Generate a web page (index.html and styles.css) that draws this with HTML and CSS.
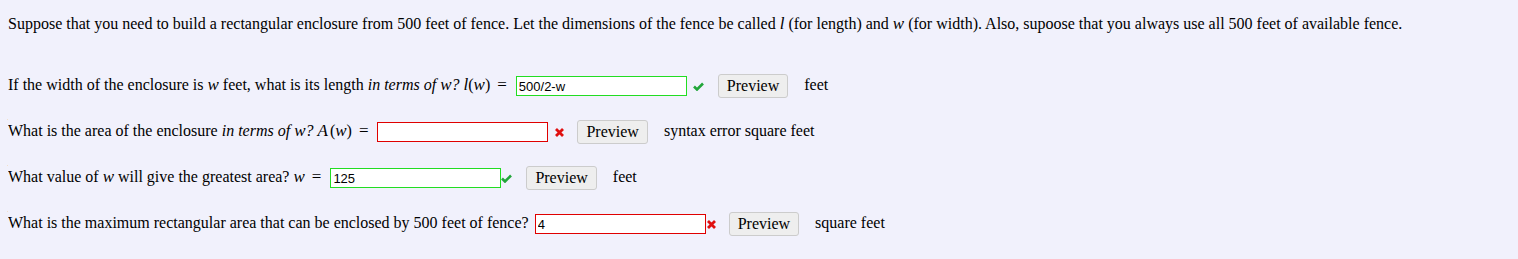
FILE: index.html
```html
<!DOCTYPE html>
<html lang="en">
<head>
    <meta charset="UTF-8">
    <title>Fence enclosure problem</title>
    <link rel="stylesheet" href="styles.css">
</head>
<body>
    <div class="problem">
        <p class="intro">Suppose that you need to build a rectangular enclosure from 500 feet of fence. Let the dimensions of the fence be called <span class="m">l</span> (for length) and <span class="m">w</span> (for width). Also, supoose that you always use all 500 feet of available fence.</p>

        <div class="row">
            If the width of the enclosure is <span class="m">w</span> feet, what is its length <em>in terms of <span class="m">w</span>?</em> <span class="m">l</span>(<span class="m">w</span>) <span class="eq">=</span>
            <input class="answer ok" type="text" value="500/2-w">
            <svg class="mark" width="11" height="9" viewBox="0 0 11 9"><path d="M1 4.5 L4 7.5 L10 1.5" fill="none" stroke="#22a63a" stroke-width="2.6"/></svg>
            <button class="preview">Preview</button>
            <span class="unit">feet</span>
        </div>

        <div class="row">
            What is the area of the enclosure <em>in terms of <span class="m">w</span>?</em> <span class="m cap">A</span>(<span class="m">w</span>) <span class="eq">=</span>
            <input class="answer bad" type="text" value="">
            <svg class="mark near" width="11" height="9" viewBox="0 0 11 9"><path d="M2 1 L9 8 M9 1 L2 8" fill="none" stroke="#e01010" stroke-width="2.8"/></svg>
            <button class="preview">Preview</button>
            <span class="unit">syntax error square feet</span>
        </div>

        <div class="row">
            What value of <span class="m">w</span> will give the greatest area? <span class="m">w</span> <span class="eq">=</span>
            <input class="answer ok" type="text" value="125"><svg class="mark tight" width="11" height="9" viewBox="0 0 11 9"><path d="M1 4.5 L4 7.5 L10 1.5" fill="none" stroke="#22a63a" stroke-width="2.6"/></svg>
            <button class="preview">Preview</button>
            <span class="unit">feet</span>
        </div>

        <div class="row">
            What is the maximum rectangular area that can be enclosed by 500 feet of fence?
            <input class="answer bad" type="text" value="4"><svg class="mark tight near" width="11" height="9" viewBox="0 0 11 9"><path d="M2 1 L9 8 M9 1 L2 8" fill="none" stroke="#e01010" stroke-width="2.8"/></svg>
            <button class="preview">Preview</button>
            <span class="unit">square feet</span>
        </div>
    </div>
</body>
</html>
```

FILE: styles.css
```css
body {
    margin: 8px;
    background-color: #f1f1fc;
    font-family: "Liberation Serif", "Times New Roman", serif;
    font-size: 16px;
    color: #000000;
}
.intro {
    margin: 6px 0 38px;
    line-height: 20px;
}
.row {
    height: 26px;
    line-height: 26px;
    margin-bottom: 20px;
    white-space: nowrap;
}
.m {
    font-style: italic;
    font-size: 17px;
}
.m.cap {
    padding-right: 2px;
}
.eq {
    margin: 0 3px;
    font-size: 17px;
}
.answer {
    width: 171px;
    height: 20px;
    box-sizing: border-box;
    padding: 0 2px;
    margin: 0 0 0 2px;
    border: 1px solid #cccccc;
    background: #ffffff;
    font-family: "Liberation Sans", Arial, sans-serif;
    font-size: 13px;
    vertical-align: middle;
}
.answer.ok {
    border-color: #22dd22;
}
.answer.bad {
    border-color: #e00000;
}
.mark {
    margin: 0 10px 0 2px;
    vertical-align: middle;
}
.mark.near {
    margin-right: 8px;
}
.mark.tight {
    margin-left: 0;
}
.preview {
    height: 24px;
    padding: 0 8px;
    margin-right: 12px;
    background: #eeeeee;
    border: 1px solid #cccccc;
    border-radius: 3px;
    font-family: "Liberation Serif", "Times New Roman", serif;
    font-size: 16px;
    color: #000000;
    vertical-align: middle;
}
```
